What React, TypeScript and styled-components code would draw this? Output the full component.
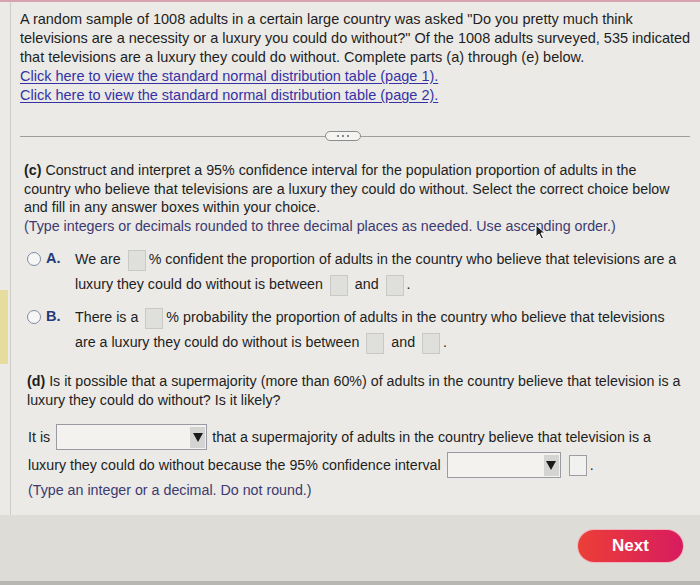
import styled, { createGlobalStyle } from "styled-components";

const GlobalStyle = createGlobalStyle`
  html, body {
    margin: 0;
    padding: 0;
    background: #e9e8e4;
  }
  body {
    font-family: "Liberation Sans", Arial, Helvetica, sans-serif;
    color: #1e1e1e;
  }
`;

const Page = styled.div`
  width: 700px;
  height: 585px;
  display: flex;
  flex-direction: column;
  background: #ebeae6;
  border-top: 2px solid #d7a3b3;
  box-sizing: border-box;
  overflow: hidden;
`;

const Body = styled.div`
  display: flex;
  height: 513px;
`;

const Gutter = styled.div`
  width: 10px;
  flex-shrink: 0;
  display: flex;
  flex-direction: column;
`;

const Marker = styled.div`
  margin-top: 288px;
  height: 74px;
  width: 8px;
  background: #e6dc9e;
`;

const Panel = styled.div`
  flex: 1;
  border-left: 1px solid #cdccc7;
  padding: 0 10px 0 9px;
  position: relative;
  font-size: 14.25px;
`;

const Intro = styled.p`
  margin: 8px 0 0;
  font-size: 14.5px;
  line-height: 19px;
  white-space: nowrap;
`;

const TableLink = styled.a`
  color: #3532a6;
  text-decoration: underline;
  text-underline-offset: 2px;
  cursor: pointer;
`;

const Divider = styled.div`
  display: flex;
  align-items: center;
  margin-top: 26px;
  height: 10px;
  &::before,
  &::after {
    content: "";
    height: 1px;
    background: #9f9e9a;
  }
  &::before {
    width: 305px;
  }
  &::after {
    flex: 1;
  }
`;

const DotsButton = styled.button`
  width: 36px;
  height: 10px;
  padding: 0;
  border: 1px solid #8c8c8c;
  border-radius: 5px;
  background: #f4f4f2;
  display: flex;
  align-items: center;
  justify-content: center;
  gap: 3px;
  span {
    width: 2px;
    height: 2px;
    border-radius: 50%;
    background: #666;
  }
`;

const Section = styled.div<{ $top: number; $lh?: number; $indent?: number }>`
  margin-top: ${(p) => p.$top}px;
  padding-left: ${(p) => p.$indent ?? 4}px;
  line-height: ${(p) => p.$lh ?? 18.5}px;
  white-space: nowrap;
`;

const Hint = styled.span`
  color: #3d3a70;
`;

const Option = styled.div<{ $top: number }>`
  display: flex;
  margin-top: ${(p) => p.$top}px;
  padding-left: 7px;
  line-height: 25px;
  white-space: nowrap;
`;

const Radio = styled.span`
  width: 12px;
  height: 12px;
  border: 1.5px solid #7f8ca8;
  border-radius: 50%;
  background: #f6f6f4;
  margin-top: 5px;
  flex-shrink: 0;
`;

const Letter = styled.span`
  font-weight: bold;
  color: #253a78;
  font-size: 14.5px;
  width: 29px;
  padding-left: 5px;
  line-height: 22px;
`;

const OptionText = styled.div``;

const Blank = styled.span<{ $w?: number }>`
  display: inline-block;
  width: ${(p) => p.$w ?? 18}px;
  height: 21px;
  box-sizing: border-box;
  border: 1px solid #c9c9c6;
  background: #dfdfdc;
  vertical-align: middle;
  margin: 0 3px;
`;

const EmptyBox = styled(Blank)`
  background: #f1f1ef;
  border-color: #9d9da3;
`;

const Row = styled.div<{ $lh: number }>`
  display: flex;
  align-items: center;
  height: ${(p) => p.$lh}px;
  white-space: nowrap;
`;

const Select = styled.div<{ $w: number }>`
  width: ${(p) => p.$w}px;
  height: 26px;
  box-sizing: border-box;
  border: 1px solid #9a9aa2;
  background: #f3f2ee;
  display: flex;
  justify-content: flex-end;
  align-items: center;
  padding-right: 1px;
  margin: 0 5px 0 6px;
`;

const Arrow = styled.span`
  width: 15px;
  height: 21px;
  background: #d4d4d2;
  display: flex;
  align-items: center;
  justify-content: center;
  &::after {
    content: "";
    border-left: 5px solid transparent;
    border-right: 5px solid transparent;
    border-top: 9px solid #1a1a1a;
  }
`;

const Cursor = styled.svg`
  position: absolute;
  left: 524px;
  top: 222px;
`;

const Footer = styled.div`
  flex: 1;
  background: #dedcd7;
  border-bottom: 4px solid #b9b7b1;
  display: flex;
  justify-content: flex-end;
  align-items: flex-start;
  padding: 15px 17px 0 0;
`;

const NextButton = styled.button`
  width: 105px;
  height: 32px;
  border: none;
  border-radius: 16px;
  background: linear-gradient(90deg, #ec3f37, #d81b5f);
  box-shadow: 0 0 0 1px #f2b4c2;
  color: #fff;
  font-family: "Liberation Sans", Arial, sans-serif;
  font-weight: bold;
  font-size: 17px;
  cursor: pointer;
`;

export default function App() {
  return (
    <>
      <GlobalStyle />
      <Page>
        <Body>
          <Gutter>
            <Marker />
          </Gutter>
          <Panel>
            <Intro>
              A random sample of 1008 adults in a certain large country was asked "Do you pretty much think
              <br />
              televisions are a necessity or a luxury you could do without?" Of the 1008 adults surveyed, 535 indicated
              <br />
              that televisions are a luxury they could do without. Complete parts (a) through (e) below.
              <br />
              <TableLink>Click here to view the standard normal distribution table (page 1).</TableLink>
              <br />
              <TableLink>Click here to view the standard normal distribution table (page 2).</TableLink>
            </Intro>

            <Divider>
              <DotsButton>
                <span />
                <span />
                <span />
              </DotsButton>
            </Divider>

            <Section $top={20}>
              <b>(c)</b> Construct and interpret a 95% confidence interval for the population proportion of adults in the
              <br />
              country who believe that televisions are a luxury they could do without. Select the correct choice below
              <br />
              and fill in any answer boxes within your choice.
              <br />
              <Hint>(Type integers or decimals rounded to three decimal places as needed. Use ascending order.)</Hint>
            </Section>

            <Option $top={12}>
              <Radio />
              <Letter>A.</Letter>
              <OptionText>
                We are <Blank />% confident the proportion of adults in the country who believe that televisions are a
                <br />
                luxury they could do without is between <Blank /> and <Blank />.
              </OptionText>
            </Option>

            <Option $top={8}>
              <Radio />
              <Letter>B.</Letter>
              <OptionText>
                There is a <Blank />% probability the proportion of adults in the country who believe that televisions
                <br />
                are a luxury they could do without is between <Blank /> and <Blank />.
              </OptionText>
            </Option>

            <Section $top={17} $lh={19} $indent={7}>
              <b>(d)</b> Is it possible that a supermajority (more than 60%) of adults in the country believe that television is a
              <br />
              luxury they could do without? Is it likely?
            </Section>

            <Section $top={13} $indent={8}>
              <Row $lh={28}>
                It is
                <Select $w={151}>
                  <Arrow />
                </Select>
                that a supermajority of adults in the country believe that television is a
              </Row>
              <Row $lh={28}>
                luxury they could do without because the 95% confidence interval
                <Select $w={114}>
                  <Arrow />
                </Select>
                <EmptyBox />.
              </Row>
              <Row $lh={22}>
                <Hint>(Type an integer or a decimal. Do not round.)</Hint>
              </Row>
            </Section>

            <Cursor width="12" height="16" viewBox="0 0 12 16">
              <path d="M1 1 L1 13 L4 10 L6.5 15 L8.5 14 L6 9 L10 9 Z" fill="#222" stroke="#fff" strokeWidth="1" />
            </Cursor>
          </Panel>
        </Body>
        <Footer>
          <NextButton>Next</NextButton>
        </Footer>
      </Page>
    </>
  );
}
